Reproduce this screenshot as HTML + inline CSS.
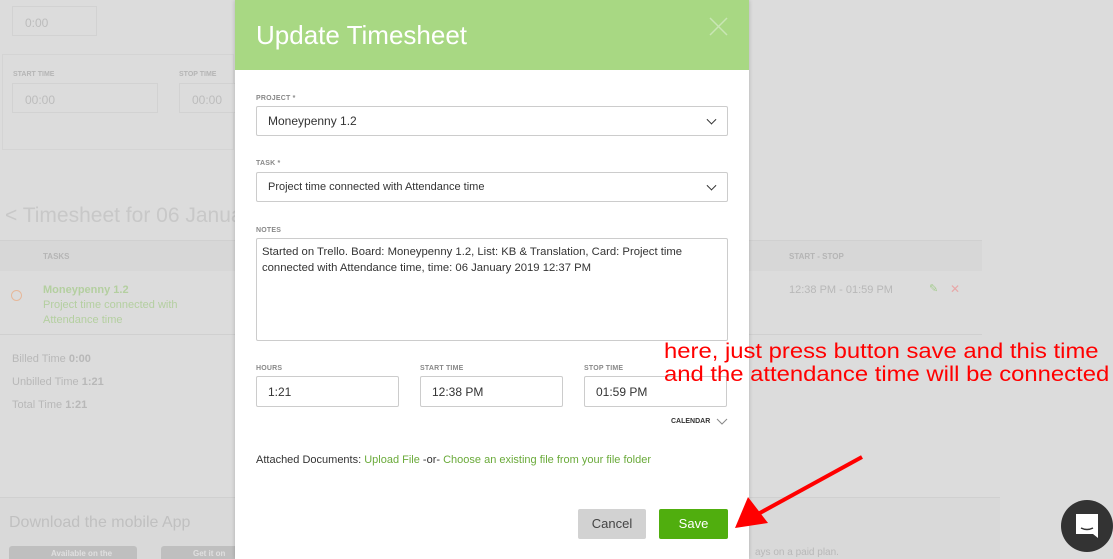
<!DOCTYPE html>
<html style="width:1113px;height:559px;overflow:hidden"><head><meta charset="utf-8"><style>
*{box-sizing:border-box;margin:0;padding:0}
body{width:1113px;height:559px;overflow:hidden;background:#dcdcdc;font-family:"Liberation Sans",sans-serif;position:relative;color:#555}
.a{position:absolute}
.bg-in{border:1px solid #d2d2d2;background:#dcdcdc;color:#bcbcbc;font-size:12px;padding:9px 12px}
.lbl{font-size:7px;font-weight:bold;color:#888;letter-spacing:.2px}
.bl{font-size:7px;font-weight:bold;color:#b5b5b5}
.in{position:absolute;border:1px solid #ccc;border-radius:2px;background:#fff;font-size:12px;color:#333;padding:0 11px;display:flex;align-items:center}
.chev{position:absolute;right:12px;top:50%;width:7px;height:7px;border-right:1.5px solid #333;border-bottom:1.5px solid #333;transform:translateY(-70%) rotate(45deg)}
</style></head><body>
<div class="a bg-in" style="left:12px;top:6px;width:85px;height:30px">0:00</div>
<div class="a" style="left:2px;top:54px;width:232px;height:96px;border:1px solid #d4d4d4"></div>
<div class="a bl" style="left:13px;top:71px">START TIME</div>
<div class="a bl" style="left:179px;top:71px">STOP TIME</div>
<div class="a bg-in" style="left:12px;top:83px;width:146px;height:30px">00:00</div>
<div class="a bg-in" style="left:179px;top:83px;width:60px;height:30px">00:00</div>
<div class="a" style="left:5px;top:204px;font-size:21px;color:#c8c8c8">&lt; Timesheet for 06 January</div>
<div class="a" style="left:0;top:240px;width:982px;height:31px;background:#d7d7d7;border-top:1px solid #d0d0d0"></div>
<div class="a bl" style="left:43px;top:252px;font-size:8px">TASKS</div>
<div class="a bl" style="left:789px;top:252px;font-size:8px">START - STOP</div>
<div class="a" style="left:11px;top:290px;width:11px;height:11px;border:1.5px solid #e6b89a;border-radius:50%"></div>
<div class="a" style="left:43px;top:283px;font-size:11px;line-height:15px;color:#b4cfa0"><b>Moneypenny 1.2</b><br>Project time connected with<br>Attendance time</div>
<div class="a" style="left:789px;top:284px;font-size:11px;color:#b8b8b8">12:38 PM - 01:59 PM</div>
<div class="a" style="left:929px;top:282px;font-size:11px;color:#a5cc8f">&#9998;</div>
<div class="a" style="left:950px;top:282px;font-size:12px;color:#e8a8a8">&#10005;</div>
<div class="a" style="left:0;top:334px;width:982px;border-top:1px solid #d0d0d0"></div>
<div class="a" style="left:12px;top:348px;font-size:11px;line-height:23px;color:#b8b8b8">Billed Time <b>0:00</b><br>Unbilled Time <b>1:21</b><br>Total Time <b>1:21</b></div>
<div class="a" style="left:0;top:497px;width:1000px;height:62px;border-top:1px solid #d0d0d0;background:#d9d9d9"></div>
<div class="a" style="left:9px;top:514px;font-size:16px;color:#c0c0c0">Download the mobile App</div>
<div class="a" style="left:9px;top:546px;width:128px;height:20px;background:#bfbfbf;border-radius:3px;color:#e0e0e0;font-size:8px;font-weight:bold;padding:3px 0 0 42px">Available on the</div>
<div class="a" style="left:161px;top:546px;width:90px;height:20px;background:#bfbfbf;border-radius:3px;color:#e0e0e0;font-size:8px;font-weight:bold;padding:3px 0 0 32px">Get it on</div>
<div class="a" style="left:755px;top:547px;font-size:10px;color:#b8b8b8">ays on a paid plan.</div>
<div class="a" style="left:235px;top:0;width:514px;height:559px;background:#fff;box-shadow:0 0 4px rgba(0,0,0,.2)"></div>
<div class="a" style="left:235px;top:0;width:514px;height:70px;background:#a8d883"></div>
<div class="a" style="left:256px;top:20px;font-size:26px;color:#fff">Update Timesheet</div>
<svg class="a" style="left:709px;top:17px" width="19" height="19"><path d="M1 1L18 18M18 1L1 18" stroke="#c9e6b4" stroke-width="1.5"/></svg>
<div class="a lbl" style="left:256px;top:95px">PROJECT *</div>
<div class="in" style="left:256px;top:106px;width:472px;height:30px">Moneypenny 1.2<span class="chev"></span></div>
<div class="a lbl" style="left:256px;top:160px">TASK *</div>
<div class="in" style="left:256px;top:172px;width:472px;height:30px;font-size:11px">Project time connected with Attendance time<span class="chev"></span></div>
<div class="a lbl" style="left:256px;top:227px">NOTES</div>
<div class="in" style="left:256px;top:238px;width:472px;height:103px;align-items:flex-start;padding:5px 20px 0 5px;font-size:11.3px;line-height:16px;color:#333">Started on Trello. Board: Moneypenny 1.2, List: KB &amp; Translation, Card: Project time connected with Attendance time, time: 06 January 2019 12:37 PM</div>
<div class="a lbl" style="left:256px;top:365px">HOURS</div>
<div class="a lbl" style="left:420px;top:365px">START TIME</div>
<div class="a lbl" style="left:584px;top:365px">STOP TIME</div>
<div class="in" style="left:256px;top:376px;width:143px;height:31px">1:21</div>
<div class="in" style="left:420px;top:376px;width:143px;height:31px">12:38 PM</div>
<div class="in" style="left:584px;top:376px;width:143px;height:31px">01:59 PM</div>
<div class="a" style="left:671px;top:418px;font-size:7px;font-weight:bold;color:#333">CALENDAR</div>
<svg class="a" style="left:716px;top:418px" width="12" height="7"><path d="M1 1L6 6L11 1" stroke="#888" fill="none"/></svg>
<div class="a" style="left:256px;top:454px;font-size:11px;color:#333">Attached Documents: <span style="color:#6aaa3a">Upload File</span> -or- <span style="color:#6aaa3a">Choose an existing file from your file folder</span></div>
<div class="a" style="left:578px;top:509px;width:68px;height:30px;background:#d2d2d2;border-radius:2px;font-size:13px;color:#444;text-align:center;line-height:30px">Cancel</div>
<div class="a" style="left:659px;top:509px;width:69px;height:30px;background:#50ae0e;border-radius:2px;font-size:13px;color:#fff;text-align:center;line-height:30px">Save</div>
<div class="a" style="left:664px;top:340px;font-size:21px;line-height:23px;color:#f00;transform-origin:0 0;transform:scaleX(1.135);white-space:nowrap">here, just press button save and this time<br>and the attendance time will be connected</div>
<svg class="a" style="left:728px;top:450px" width="140" height="90"><path d="M134 7L30 64" stroke="#f00" stroke-width="4"/><path d="M7 78L20 47L40 73Z" fill="#f00"/></svg>
<div class="a" style="left:1061px;top:500px;width:52px;height:52px;border-radius:50%;background:#333"></div>
<svg class="a" style="left:1073px;top:512px" width="28" height="28"><path d="M3 2H25V26L20 22H3Z" fill="#fff"/><path d="M8 16Q14 19 20 16" stroke="#333" stroke-width="1.5" fill="none"/></svg>
</body></html>
